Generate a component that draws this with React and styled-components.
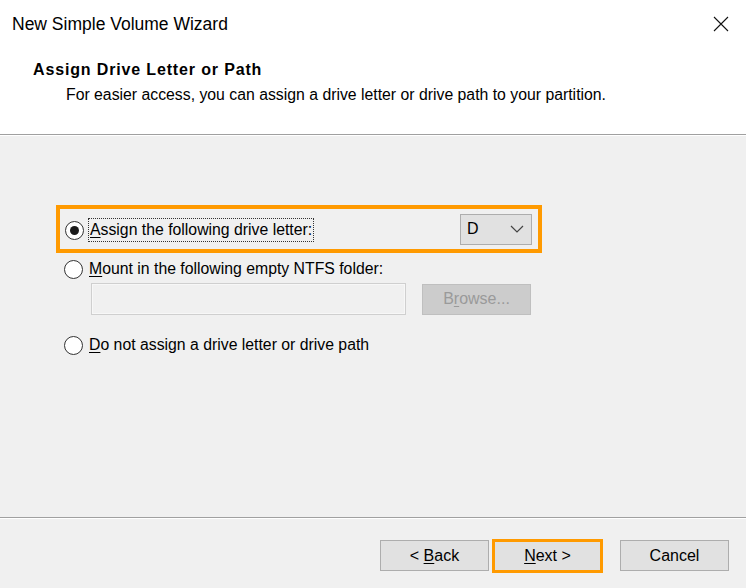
import React from "react";
import styled, { createGlobalStyle } from "styled-components";

const Global = createGlobalStyle`
  html, body { margin: 0; padding: 0; background: #ffffff; }
  * { box-sizing: border-box; }
`;

const Window = styled.div`
  width: 746px;
  height: 588px;
  display: flex;
  flex-direction: column;
  background: #f0f0f0;
  font-family: "Liberation Sans", Arial, sans-serif;
  color: #000;
  overflow: hidden;
`;

const TitleBar = styled.div`
  height: 48px;
  background: #fff;
  display: flex;
  align-items: center;
  justify-content: space-between;
  padding: 0 17px 0 12px;
  font-size: 17.5px;
`;

const Header = styled.div`
  height: 86px;
  background: #fff;
  padding: 13px 0 0 33px;
`;

const Heading = styled.div`
  font-weight: bold;
  font-size: 16px;
  letter-spacing: 0.85px;
`;

const SubTitle = styled.div`
  font-size: 15.8px;
  margin: 7px 0 0 33px;
`;

const Separator = styled.div`
  height: 2px;
  border-top: 1px solid #a0a0a0;
  border-bottom: 1px solid #ffffff;
`;

const Body = styled.div`
  flex: 1;
  padding: 69px 0 0 56px;
  display: flex;
  flex-direction: column;
`;

const Highlight = styled.div`
  width: 486px;
  height: 48px;
  border: 4px solid #ff9a00;
  display: flex;
  align-items: center;
  padding: 2px 6px 0 5px;
`;

const Row = styled.div`
  display: flex;
  align-items: center;
  height: 26px;
  padding-left: 8px;
  margin-top: ${(p) => p.$mt || 0}px;
`;

const Radio = styled.span`
  width: 19px;
  height: 19px;
  border-radius: 50%;
  border: 1px solid #333;
  background: #fff;
  display: flex;
  align-items: center;
  justify-content: center;
  flex-shrink: 0;
  &::after {
    content: "";
    display: ${(p) => (p.$checked ? "block" : "none")};
    width: 9px;
    height: 9px;
    border-radius: 50%;
    background: #1a1a1a;
  }
`;

const Label = styled.span`
  font-size: 15.8px;
  margin-left: 4px;
  padding: 1px 1px;
  border: 1px dotted ${(p) => (p.$focus ? "#333" : "transparent")};
  line-height: 20px;
  white-space: nowrap;
`;

const Select = styled.div`
  margin-left: auto;
  margin-top: -2px;
  width: 72px;
  height: 31px;
  background: #e1e1e1;
  border: 1px solid #adadad;
  display: flex;
  align-items: center;
  justify-content: space-between;
  padding: 0 7px 0 6px;
  font-size: 16px;
`;

const FieldRow = styled.div`
  display: flex;
  align-items: center;
  padding-left: 35px;
  gap: 16px;
  margin-top: 1px;
`;

const TextField = styled.div`
  width: 315px;
  height: 32px;
  background: #f0f0f0;
  border: 1px solid #cfcfcf;
  box-shadow: inset 0 0 0 1px #f7f7f7;
`;

const Button = styled.div`
  width: ${(p) => (p.$highlight ? 111 : 109)}px;
  height: ${(p) => (p.$highlight ? 34 : 31)}px;
  background: ${(p) => (p.$disabled ? "#cccccc" : "#e1e1e1")};
  border: ${(p) =>
    p.$highlight ? "3px solid #ff9a00" : p.$disabled ? "1px solid #bfbfbf" : "1px solid #adadad"};
  color: ${(p) => (p.$disabled ? "#9a9a9a" : "#000")};
  display: flex;
  align-items: center;
  justify-content: center;
  font-size: 16px;
`;

const Footer = styled.div`
  height: 69px;
  display: flex;
  align-items: flex-start;
  justify-content: flex-end;
  padding: 21px 17px 0 0;
`;

const ButtonGroup = styled.div`
  display: flex;
  align-items: center;
  gap: ${(p) => p.$gap}px;
  margin-left: ${(p) => p.$ml || 0}px;
  height: 31px;
`;

const U = styled.span`
  text-decoration: underline;
  text-underline-offset: 2px;
`;

const CloseIcon = () => (
  <svg width="16" height="16" viewBox="0 0 16 16">
    <path d="M1 1 L15 15 M15 1 L1 15" stroke="#111" strokeWidth="1.1" fill="none" />
  </svg>
);

const Chevron = () => (
  <svg width="14" height="8" viewBox="0 0 14 8">
    <path d="M1 1 L7 7 L13 1" stroke="#444" strokeWidth="1.2" fill="none" />
  </svg>
);

export default function App() {
  return (
    <Window>
      <Global />
      <TitleBar>
        <span>New Simple Volume Wizard</span>
        <CloseIcon />
      </TitleBar>
      <Header>
        <Heading>Assign Drive Letter or Path</Heading>
        <SubTitle>For easier access, you can assign a drive letter or drive path to your partition.</SubTitle>
      </Header>
      <Separator />
      <Body>
        <Highlight>
          <Radio $checked />
          <Label $focus>
            <U>A</U>ssign the following drive letter:
          </Label>
          <Select>
            <span>D</span>
            <Chevron />
          </Select>
        </Highlight>
        <Row $mt={3}>
          <Radio />
          <Label>
            <U>M</U>ount in the following empty NTFS folder:
          </Label>
        </Row>
        <FieldRow>
          <TextField />
          <Button $disabled>
            B<U>r</U>owse...
          </Button>
        </FieldRow>
        <Row $mt={17}>
          <Radio />
          <Label>
            <U>D</U>o not assign a drive letter or drive path
          </Label>
        </Row>
      </Body>
      <Separator />
      <Footer>
        <ButtonGroup $gap={3}>
          <Button>
            &lt;&nbsp;<U>B</U>ack
          </Button>
          <Button $highlight>
            <U>N</U>ext &gt;
          </Button>
        </ButtonGroup>
        <ButtonGroup $gap={0} $ml={17}>
          <Button>Cancel</Button>
        </ButtonGroup>
      </Footer>
    </Window>
  );
}
